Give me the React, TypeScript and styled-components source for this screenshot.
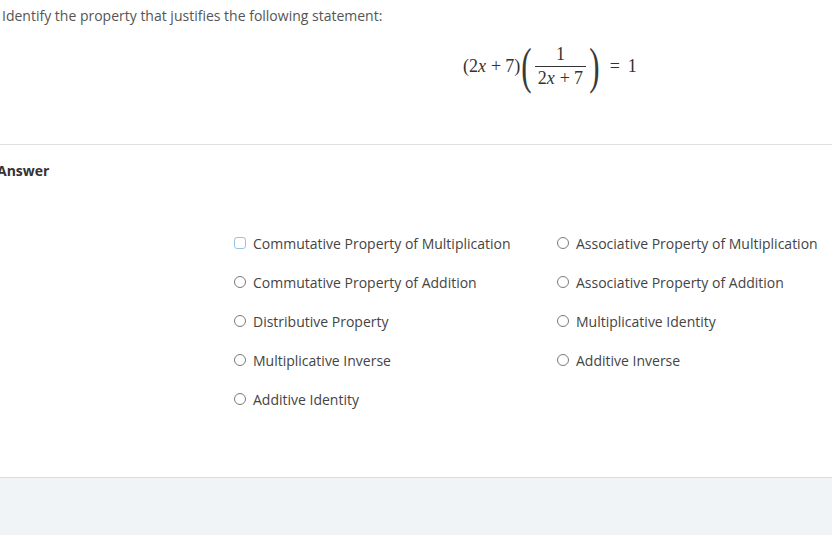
import React from "react";
import styled, { createGlobalStyle } from "styled-components";

const GlobalStyle = createGlobalStyle`
  html, body {
    margin: 0;
    padding: 0;
    background: #ffffff;
  }
  body {
    font-family: "Open Sans", "Liberation Sans", sans-serif;
    overflow: hidden;
  }
`;

const Page = styled.div`
  width: 832px;
  height: 535px;
  display: flex;
  flex-direction: column;
  background: #ffffff;
`;

const Question = styled.section`
  padding: 6px 0 0 2px;
  height: 145px;
  box-sizing: border-box;
  border-bottom: 1px solid #e0e0e0;
`;

const Prompt = styled.p`
  margin: 0;
  font-size: 14px;
  line-height: 20px;
  color: #555555;
`;

const MathRow = styled.div`
  display: flex;
  align-items: center;
  padding-left: 461px;
  margin-top: 17px;
  font-family: "Liberation Serif", "Times New Roman", serif;
  font-size: 18px;
  color: #333333;
  height: 46px;
`;

const Italic = styled.i`
  font-style: italic;
  padding-right: 1px;
`;

const Op = styled.span`
  margin: 0 4px;
`;

const BigParen = styled.span`
  font-size: 50px;
  line-height: 46px;
  font-weight: 300;
  display: inline-block;
  transform: scaleX(0.62);
  margin: 0 -2px;
  color: #3a3a3a;
`;

const Fraction = styled.span`
  display: inline-flex;
  flex-direction: column;
  align-items: center;
  margin: 0 2px;
`;

const Numerator = styled.span`
  line-height: 20px;
  padding-bottom: 2px;
`;

const Denominator = styled.span`
  line-height: 20px;
  border-top: 1px solid #333333;
  padding: 1px 3px 0;
`;

const Equals = styled.span`
  margin-left: 9px;
`;

const AnswerSection = styled.section`
  flex: 1;
  border-bottom: 1px solid #dcdcdc;
  padding-top: 16px;
`;

const AnswerLabel = styled.h3`
  margin: 0 0 0 -3px;
  font-size: 14px;
  line-height: 20px;
  font-weight: 700;
  color: #333333;
`;

const Options = styled.div`
  display: grid;
  grid-template-columns: 323px 280px;
  grid-auto-rows: 39px;
  margin: 52px 0 0 234px;
`;

const Option = styled.label`
  display: flex;
  align-items: center;
  height: 20px;
  gap: 7px;
  font-size: 14px;
  color: #444444;
  white-space: nowrap;
`;

const Radio = styled.span<{ focused?: boolean }>`
  width: 12px;
  height: 12px;
  box-sizing: border-box;
  flex: none;
  border: 1px solid ${(p) => (p.focused ? "#9cc4e2" : "#7a7a7a")};
  border-radius: ${(p) => (p.focused ? "3px" : "50%")};
`;

const Footer = styled.footer`
  height: 57px;
  background: #f0f4f7;
`;

const options = [
  "Commutative Property of Multiplication",
  "Associative Property of Multiplication",
  "Commutative Property of Addition",
  "Associative Property of Addition",
  "Distributive Property",
  "Multiplicative Identity",
  "Multiplicative Inverse",
  "Additive Inverse",
  "Additive Identity",
];

export default function App() {
  return (
    <Page>
      <GlobalStyle />
      <Question>
        <Prompt>Identify the property that justifies the following statement:</Prompt>
        <MathRow>
          <span>
            (2<Italic>x</Italic>
            <Op>+</Op>7)
          </span>
          <BigParen>(</BigParen>
          <Fraction>
            <Numerator>1</Numerator>
            <Denominator>
              2<Italic>x</Italic>
              <Op>+</Op>7
            </Denominator>
          </Fraction>
          <BigParen>)</BigParen>
          <Equals>
            =<Op />1
          </Equals>
        </MathRow>
      </Question>
      <AnswerSection>
        <AnswerLabel>Answer</AnswerLabel>
        <Options>
          {options.map((o, i) => (
            <Option key={o}>
              <Radio focused={i === 0} />
              {o}
            </Option>
          ))}
        </Options>
      </AnswerSection>
      <Footer />
    </Page>
  );
}
